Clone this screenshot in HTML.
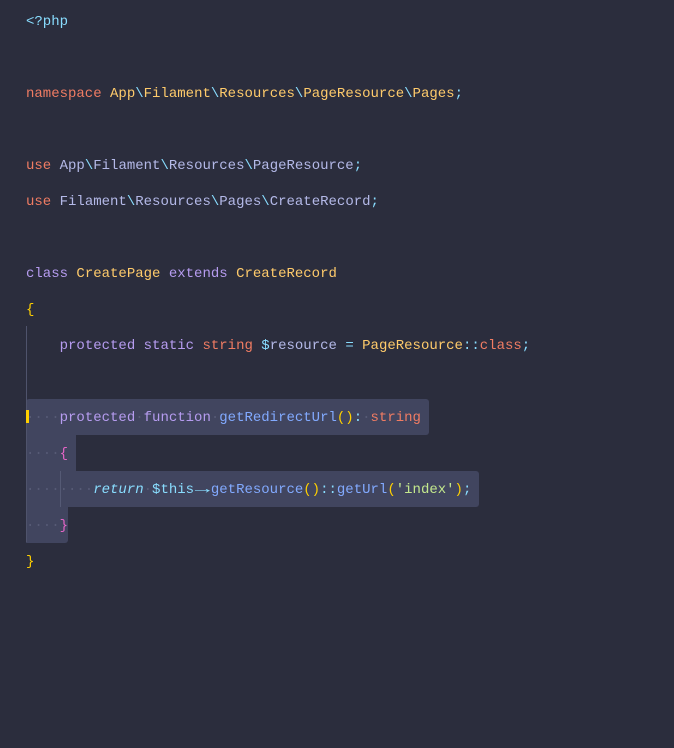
<!DOCTYPE html><html><head><style>
body{margin:0;background:#2b2d3d;width:674px;height:748px;overflow:hidden;position:relative}
.l{position:absolute;left:26px;height:36px;line-height:36px;font:14px "Liberation Mono",monospace;white-space:pre;color:#b4b9e8}
.k{color:#f07c63}.y{color:#ffcb6b}.b{color:#89ddff}.p{color:#b69cf0}.f{color:#82aaff}.g{color:#c3e88d}.br{color:#ffd000}.m{color:#e565c7}.d{color:#565a75}
.h{position:absolute;background:#41455f;border-radius:3px}
.ar{display:inline-block;width:16.8px;text-align:center;color:#89ddff;transform:scaleX(1.8)}
</style></head><body>
<div class="h" style="left:26px;top:399px;width:403px;height:36px"></div>
<div class="h" style="left:26px;top:434px;width:50px;height:38px;border-radius:0"></div>
<div class="h" style="left:26px;top:471px;width:453px;height:36px"></div>
<div class="h" style="left:26px;top:506px;width:42px;height:37px;border-radius:0 0 3px 0"></div>
<div style="position:absolute;left:26px;top:326px;width:1px;height:216px;background:#4f536c"></div>
<div style="position:absolute;left:26px;top:410px;width:3px;height:13px;background:#ffd000"></div>
<div style="position:absolute;left:60px;top:471px;width:1px;height:36px;background:#555a75"></div>
<div class="l b" style="top:14px">&lt;?php</div>
<div class="l" style="top:86px"><span class="k">namespace</span> <span class="y">App</span><span class="b">\</span><span class="y">Filament</span><span class="b">\</span><span class="y">Resources</span><span class="b">\</span><span class="y">PageResource</span><span class="b">\</span><span class="y">Pages</span><span class="b">;</span></div>
<div class="l" style="top:158px"><span class="k">use</span> App<span class="b">\</span>Filament<span class="b">\</span>Resources<span class="b">\</span>PageResource<span class="b">;</span></div>
<div class="l" style="top:194px"><span class="k">use</span> Filament<span class="b">\</span>Resources<span class="b">\</span>Pages<span class="b">\</span>CreateRecord<span class="b">;</span></div>
<div class="l" style="top:266px"><span class="p">class</span> <span class="y">CreatePage</span> <span class="p">extends</span> <span class="y">CreateRecord</span></div>
<div class="l br" style="top:302px">{</div>
<div class="l" style="top:338px">    <span class="p">protected</span> <span class="p">static</span> <span class="k">string</span> <span class="b">$</span>resource <span class="b">=</span> <span class="y">PageResource</span><span class="b">::</span><span class="k">class</span><span class="b">;</span></div>
<div class="l" style="top:410px"><span class="d">····</span><span class="p">protected</span><span class="d">·</span><span class="p">function</span><span class="d">·</span><span class="f">getRedirectUrl</span><span class="br">()</span><span class="b">:</span><span class="d">·</span><span class="k">string</span></div>
<div class="l" style="top:446px"><span class="d">····</span><span class="m">{</span></div>
<div class="l" style="top:482px"><span class="d">········</span><i class="b">return</i><span class="d">·</span><span class="b">$this</span><span class="ar">→</span><span class="f">getResource</span><span class="br">()</span><span class="b">::</span><span class="f">getUrl</span><span class="br">(</span><span class="g">'index'</span><span class="br">)</span><span class="b">;</span></div>
<div class="l" style="top:518px"><span class="d">····</span><span class="m">}</span></div>
<div class="l br" style="top:554px">}</div>
</body></html>
